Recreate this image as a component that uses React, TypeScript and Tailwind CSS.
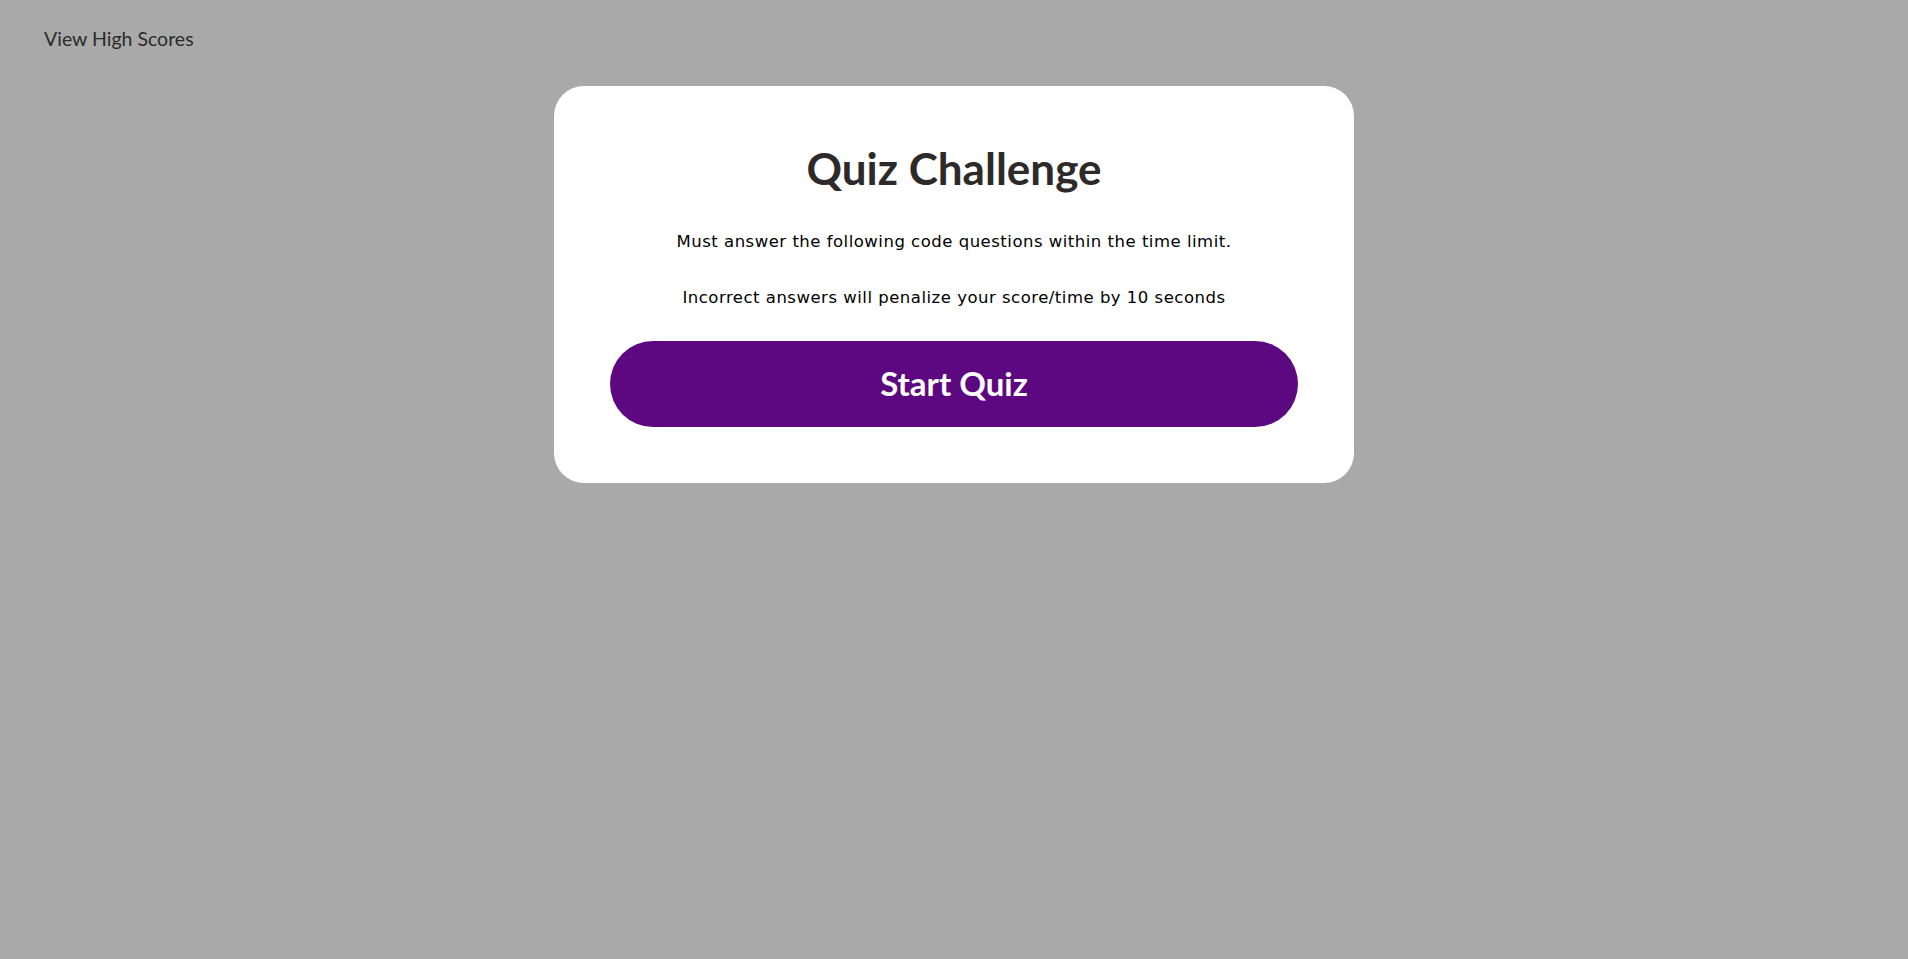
import React from "react";

export default function App() {
  return (
    <div className="min-h-[959px] w-full bg-[#a9a9a9] font-['DejaVu_Sans',sans-serif]">
      <div className="pl-[44px] pt-[27px] text-[19.5px] leading-[23px] text-[#2b2b2b] font-['Lato',sans-serif]">
        View High Scores
      </div>
      <div className="mt-[36px] mx-auto w-[800px] rounded-[30px] bg-white px-14 pt-[58px] pb-14 flex flex-col items-center">
        <h1 className="text-[44px] leading-[48px] font-bold text-[#2e2a2a] font-['Lato',sans-serif]">
          Quiz Challenge
        </h1>
        <p className="mt-[40px] text-[16.5px] leading-[20px] tracking-[0.5px] text-black">
          Must answer the following code questions within the time limit.
        </p>
        <p className="mt-[36px] text-[16.5px] leading-[20px] tracking-[0.5px] text-black">
          Incorrect answers will penalize your score/time by 10 seconds
        </p>
        <button className="mt-[33px] w-full h-[86px] rounded-full bg-[#5d0880] text-white text-[33px] font-bold font-['Lato',sans-serif]">
          Start Quiz
        </button>
      </div>
    </div>
  );
}
